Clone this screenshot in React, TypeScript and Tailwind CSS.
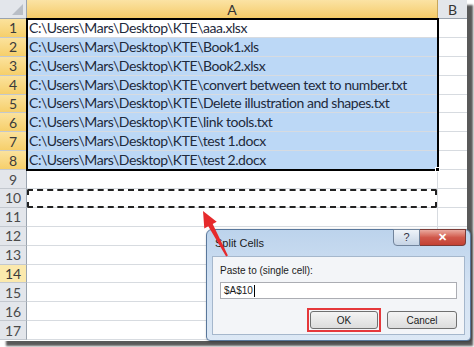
import { useMemo } from "react";

const cells: Record<number, string> = {
  1: "C:\\Users\\Mars\\Desktop\\KTE\\aaa.xlsx",
  2: "C:\\Users\\Mars\\Desktop\\KTE\\Book1.xls",
  3: "C:\\Users\\Mars\\Desktop\\KTE\\Book2.xlsx",
  4: "C:\\Users\\Mars\\Desktop\\KTE\\convert between text to number.txt",
  5: "C:\\Users\\Mars\\Desktop\\KTE\\Delete illustration and shapes.txt",
  6: "C:\\Users\\Mars\\Desktop\\KTE\\link tools.txt",
  7: "C:\\Users\\Mars\\Desktop\\KTE\\test 1.docx",
  8: "C:\\Users\\Mars\\Desktop\\KTE\\test 2.docx",
};

function RowHead({ n }: { n: number }) {
  const sel = n <= 8;
  const cls = sel
    ? "bg-gradient-to-b from-[#fbe29c] to-[#f6cf6a] text-[#3b3b3b]"
    : n === 14
      ? "bg-[#fbe9ad] text-[#3b3b3b]"
      : "bg-[#e3e6eb] text-[#4a4a4a]";
  return (
    <div
      className={`w-[27px] shrink-0 flex items-center justify-center border-r border-b border-r-[#9aa3ae] border-b-[#c3c8cf] text-[14px] tracking-normal ${cls}`}
    >
      {n}
    </div>
  );
}

function Sheet() {
  const rows = useMemo(() => Array.from({ length: 17 }, (_, i) => i + 1), []);
  return (
    <div className="w-[467px] h-[341px] bg-white overflow-hidden shadow-[6px_5px_2px_rgba(60,60,60,0.85)]">
      <div className="flex h-[19px]">
        <div className="w-[27px] shrink-0 bg-[#e3e6eb] border-r border-b border-[#9aa3ae] flex items-end justify-end p-[3px]">
          <div className="w-0 h-0 border-l-[11px] border-l-transparent border-b-[11px] border-b-[#b9bec6]" />
        </div>
        <div className="w-[411px] shrink-0 bg-gradient-to-b from-[#fbe3a4] to-[#f5cb66] border-r border-b border-r-[#c7a65a] border-b-[#d9b25a] flex items-center justify-center text-[14px] text-[#333]">
          A
        </div>
        <div className="flex-1 bg-[#e3e6eb] border-b border-[#9aa3ae] flex items-center justify-center text-[14px] text-[#333]">
          B
        </div>
      </div>
      {rows.map((n) => (
        <div key={n} className="flex h-[18.9px]">
          <RowHead n={n} />
          <div
            className={`w-[411px] shrink-0 border-r border-b border-[#d7dbe0] pl-[2px] flex items-end whitespace-nowrap text-[#1e2a3c] tracking-[-0.45px] ${
              n >= 2 && n <= 8 ? "bg-[#bcd8f6]" : "bg-white"
            }`}
          >
            <span className="leading-[18px]">{cells[n] ?? ""}</span>
          </div>
          <div className="flex-1 border-b border-[#d7dbe0]" />
        </div>
      ))}
    </div>
  );
}

function Dialog() {
  return (
    <div className="absolute left-[206px] top-[229px] w-[265px] h-[112px] rounded-t-[6px] rounded-b-[4px] border border-[#59779b] bg-gradient-to-b from-[#bcd3ec] via-[#d3e2f3] to-[#dce8f5] shadow-[1px_1px_3px_rgba(0,0,0,0.35)] font-['Liberation_Sans',Arial,sans-serif]">
      <div className="h-[26px] flex items-center pl-[8px] text-[11px] text-[#1b1b1b]">
        Split Cells
      </div>
      <div className="absolute right-[4px] top-[-1px] flex">
        <div className="w-[27px] h-[17px] rounded-bl-[4px] border border-[#71849c] bg-gradient-to-b from-[#eef3f9] to-[#c6d4e5] flex items-center justify-center text-[11px] text-[#334] leading-none">
          ?
        </div>
        <div className="w-[46px] h-[17px] rounded-br-[4px] border border-l-0 border-[#7a3a36] bg-gradient-to-b from-[#e9a99f] via-[#d0584b] to-[#c34133] flex items-center justify-center text-white text-[11px] font-bold leading-none">
          ✕
        </div>
      </div>
      <div className="mx-[5px] h-[79px] border border-[#a5b7cc] bg-[#f3f5f8] px-[7px] pt-[6px] text-[10px] text-[#1b1b1b]">
        <div className="leading-[16px]">Paste to (single cell):</div>
        <div className="mt-[3px] h-[17px] border border-[#abadb3] bg-white flex items-center pl-[3px] text-[10px] leading-none">
          $A$10<span className="ml-[1px] w-px h-[12px] bg-black" />
        </div>
        <div className="mt-[12px] flex justify-end gap-[6px]">
          <div className="border-2 border-[#e5383b] p-[1px] -my-[3px]">
            <div className="w-[68px] h-[18px] rounded-[3px] border border-[#707070] bg-gradient-to-b from-[#f4f4f4] to-[#dcdcdc] flex items-center justify-center text-[10px]">
              OK
            </div>
          </div>
          <div className="w-[70px] h-[18px] rounded-[3px] border border-[#707070] bg-gradient-to-b from-[#f4f4f4] to-[#dcdcdc] flex items-center justify-center text-[10px]">
            Cancel
          </div>
        </div>
      </div>
    </div>
  );
}

export default function App() {
  return (
    <div className="relative w-[474px] h-[347px] bg-white overflow-hidden font-['Lato',sans-serif] text-[14px]">
      <Sheet />
      {/* selection border rows 1-8 */}
      <div className="absolute left-[26px] top-[18px] w-[413px] h-[153px] border-2 border-black pointer-events-none" />
      <div className="absolute left-[435px] top-[167px] w-[5px] h-[5px] bg-black border border-white" />
      {/* marquee row 10 */}
      <div className="absolute left-[27px] top-[189px] w-[410px] h-[19px] border-2 border-dashed border-[#222] rounded-[2px]" />
      <Dialog />
      <svg className="absolute left-0 top-0" width="474" height="347">
        <polygon
          points="203,211 216.7,221.8 212.7,223.9 227.9,255.5 226.1,256.5 208.3,226.3 204.3,228.4"
          fill="#e62a2c"
        />
      </svg>
    </div>
  );
}
